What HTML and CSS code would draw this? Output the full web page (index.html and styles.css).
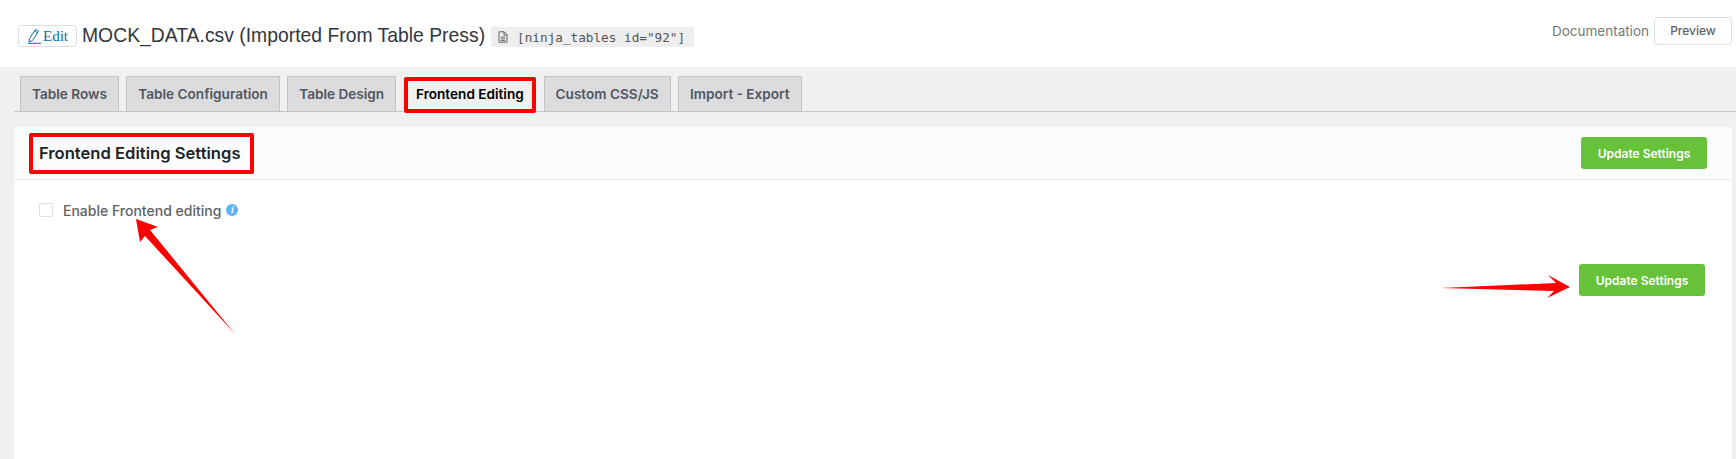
FILE: index.html
```html
<!DOCTYPE html>
<html>
<head>
	<title>Frontend Editing Settings</title>
	<link rel="stylesheet" href="styles.css">
</head>
<body>
	<header class="top">
		<div class="title-row">
			<a class="edit-btn">
				<svg class="edit-icon" width="15" height="16" viewBox="0 0 15 16"><path d="M2.5 10.5 8.5 1.5 11.5 3.2 5.5 12.5 2 14ZM7.5 3 10.5 4.8M1 15.3H14" fill="none" stroke="#0073aa" stroke-width="1"/></svg>
				Edit
			</a>
			<h1>MOCK_DATA.csv (Imported From Table Press)</h1>
			<code class="shortcode">
				<svg width="10" height="12" viewBox="0 0 10 12"><path d="M1 .8H6.3L9 3.5V11.2H1ZM6 1V4H9M2.8 6H7.2M2.8 7.8H7.2M2.8 9.6H7.2" fill="none" stroke="#555" stroke-width=".9"/></svg>
				[ninja_tables id="92"]
			</code>
			<div class="top-links">
				<a class="doc-link">Documentation</a>
				<a class="preview-btn">Preview</a>
			</div>
		</div>
	</header>
	<nav class="tabs">
		<a class="tab">Table Rows</a>
		<a class="tab">Table Configuration</a>
		<a class="tab">Table Design</a>
		<a class="tab tab-active">Frontend Editing</a>
		<a class="tab">Custom CSS/JS</a>
		<a class="tab">Import - Export</a>
	</nav>
	<main class="panel">
		<div class="panel-head">
			<h2>Frontend Editing Settings</h2>
			<button class="btn-green" type="button">Update Settings</button>
		</div>
		<div class="panel-body">
			<label class="check-row">
				<span class="check"></span>
				<span>Enable Frontend editing</span>
				<span class="info">i</span>
			</label>
			<div class="panel-foot">
				<button class="btn-green" type="button">Update Settings</button>
			</div>
		</div>
	</main>
	<svg class="arrows" width="1736" height="459" viewBox="0 0 1736 459">
		<path d="M235 334 150 230 158 227 136 219 140 242 145 236Z" fill="#f00"/>
		<path d="M1440 288 1556 283 1548 275 1570 287 1547 298 1554 291Z" fill="#f00"/>
	</svg>
</body>
</html>
```
FILE: styles.css
```css
html, body {
	margin: 0;
	height: 459px;
	overflow: hidden;
}
body {
	position: relative;
	background-color: #f0f0f0;
	font-family: Inter, "Noto Sans", sans-serif;
	color: #606266;
}
.top {
	height: 67px;
	background-color: #fff;
	box-sizing: border-box;
	padding: 17px 4px 0 18px;
}
.title-row {
	display: flex;
	align-items: center;
	height: 38px;
}
.edit-btn {
	display: flex;
	align-items: center;
	gap: 1px;
	box-sizing: border-box;
	width: 59px;
	height: 22px;
	padding-left: 8px;
	border: 1px solid #dcdfe6;
	border-radius: 3px;
	font-family: "Liberation Serif", serif;
	font-size: 15px;
	color: #0073aa;
}
h1 {
	margin: 0 0 2px 5px;
	font-family: "Liberation Sans", sans-serif;
	font-size: 19.35px;
	font-weight: 400;
	color: #32373c;
	white-space: nowrap;
}
.shortcode {
	display: flex;
	align-items: center;
	gap: 9px;
	height: 20px;
	margin: 2px 0 0 6px;
	padding: 0 9px 0 7px;
	background-color: #eee;
	font-family: "DejaVu Sans Mono", monospace;
	font-size: 12.7px;
	color: #555;
	white-space: nowrap;
}
.top-links {
	display: flex;
	align-items: center;
	align-self: flex-start;
	gap: 5px;
	margin-left: auto;
}
.doc-link {
	font-size: 13.5px;
	color: #777;
}
.preview-btn {
	box-sizing: border-box;
	width: 78px;
	height: 28px;
	line-height: 26px;
	text-align: center;
	border: 1px solid #dcdfe6;
	border-radius: 3px;
	font-size: 12px;
	font-weight: 500;
	color: #606266;
}
.tabs {
	display: flex;
	gap: 7.3px;
	height: 35px;
	margin: 9px 0 0 14px;
	padding-left: 6px;
	border-bottom: 1px solid #c3c4c7;
}
.tab {
	box-sizing: border-box;
	height: 35px;
	padding: 0 11px;
	line-height: 35px;
	background-color: #dcdcde;
	border: 1px solid #c3c4c7;
	border-bottom: none;
	font-size: 13.6px;
	font-weight: 600;
	color: #50575e;
	white-space: nowrap;
}
.tab-active {
	height: 36px;
	margin-top: 1px;
	padding: 0 8.5px;
	line-height: 26px;
	background-color: #f0f0f0;
	border: 4px solid #f00;
	border-radius: 2px;
	color: #000;
}
.panel {
	margin: 15px 4px 0 14px;
	height: 332px;
	background-color: #fff;
}
.panel-head {
	display: flex;
	align-items: center;
	justify-content: space-between;
	box-sizing: border-box;
	height: 53px;
	padding: 0 25px 0 15px;
	background-color: #fbfcfe;
	border-bottom: 1px solid #e6e8ec;
}
h2 {
	margin: 0;
	padding: 7px 9px 7px 6px;
	border: 4px solid #f00;
	border-radius: 2px;
	font-size: 16.6px;
	font-weight: 600;
	line-height: 19px;
	color: #1d2327;
}
.btn-green {
	width: 126px;
	height: 32px;
	padding: 0;
	background-color: #67c23a;
	border: none;
	border-radius: 3px;
	font-family: inherit;
	font-size: 12px;
	font-weight: 600;
	color: #fff;
}
.panel-body {
	padding: 22px 27px 0 25px;
}
.check-row {
	display: flex;
	align-items: center;
	height: 16px;
	font-size: 14px;
	font-weight: 500;
}
.check {
	box-sizing: border-box;
	width: 14px;
	height: 14px;
	margin-right: 10px;
	border: 1px solid #dcdfe6;
	border-radius: 2px;
}
.info {
	width: 12px;
	height: 12px;
	margin-left: 5px;
	border-radius: 50%;
	background-color: #5cb3fd;
	color: #fff;
	font-family: "Liberation Serif", serif;
	font-size: 10px;
	font-style: italic;
	font-weight: 700;
	line-height: 12px;
	text-align: center;
}
.panel-foot {
	display: flex;
	justify-content: flex-end;
	margin-top: 46px;
}
.arrows {
	position: absolute;
	top: 0;
	left: 0;
	pointer-events: none;
}
```
